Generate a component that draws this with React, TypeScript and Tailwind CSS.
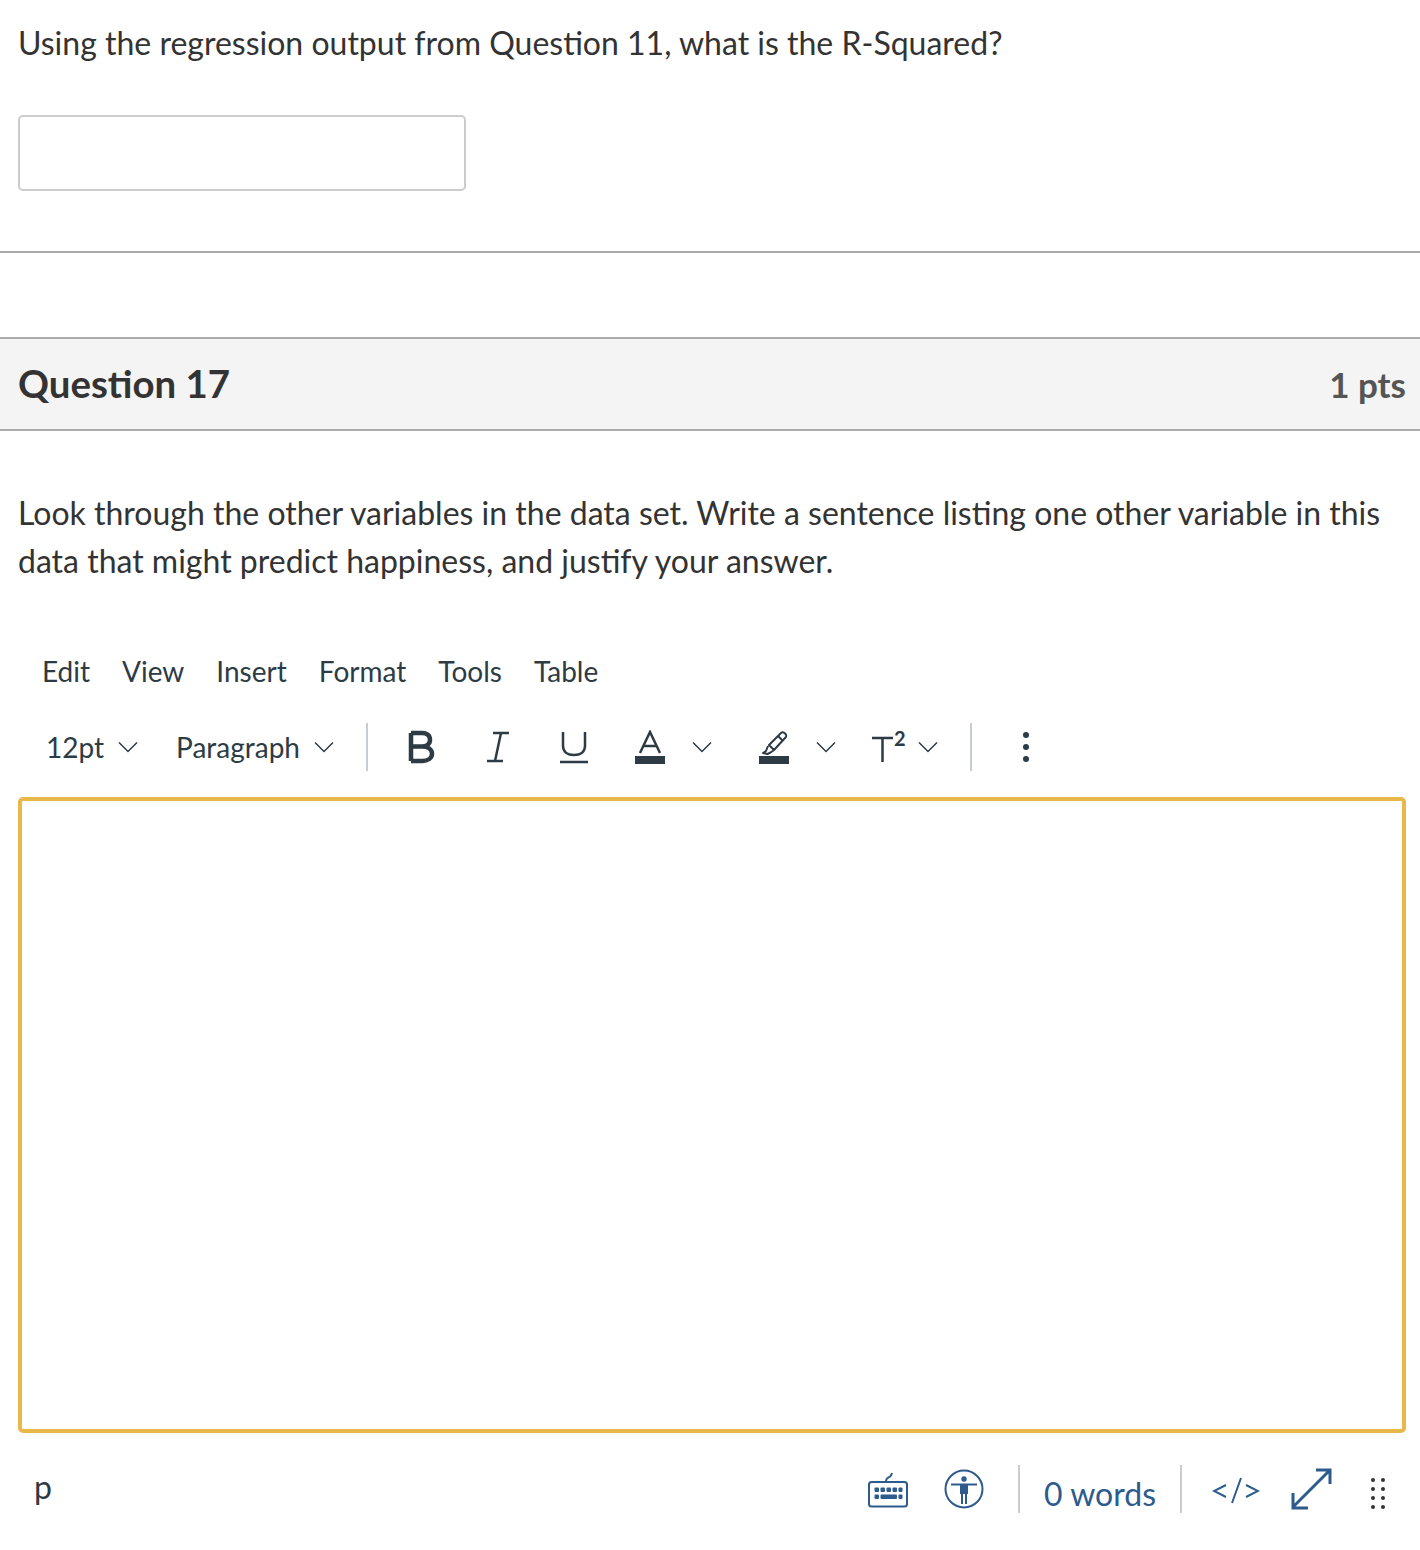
const ink = '#2d3b45';
const blue = '#2d5b8e';

function Chevron({ className }: { className: string }) {
    return (
        <svg width="20" height="12" viewBox="0 0 20 12" fill="none" stroke={ink} strokeWidth="1.5" className={`shrink-0 ${className}`}>
            <path d="M1 1.500l9 9 9-9" />
        </svg>
    );
}

function Keyboard() {
    return (
        <svg width="40" height="38" viewBox="0 0 40 38" fill="none" className="shrink-0 mt-0.5">
            <path d="M18 10c0-3 2-3 4-4.500 1-.8 1.500-1.700 2-3.500" stroke={blue} strokeWidth="2" />
            <rect x="1" y="11" width="38" height="24.500" rx="2.500" stroke={blue} strokeWidth="2" />
            <g fill={blue}>
                <rect x="6.500" y="16.500" width="4.500" height="4.500" rx="1" />
                <rect x="12.500" y="16.500" width="4.500" height="4.500" rx="1" />
                <rect x="18.500" y="16.500" width="4.500" height="4.500" rx="1" />
                <rect x="24.500" y="16.500" width="4.500" height="4.500" rx="1" />
                <rect x="30.500" y="16.500" width="4" height="4.500" rx="1" />
                <rect x="6.500" y="23.500" width="4.500" height="4.500" rx="1" />
                <rect x="12.500" y="23.500" width="16.500" height="4.500" rx="1" />
                <rect x="30.500" y="23.500" width="4" height="4.500" rx="1" />
            </g>
        </svg>
    );
}

function Accessibility() {
    return (
        <svg width="40" height="40" viewBox="0 0 40 40" fill="none" className="shrink-0">
            <circle cx="20" cy="20" r="18.500" stroke={blue} strokeWidth="2" />
            <circle cx="20" cy="10" r="2.700" fill={blue} />
            <path d="M7 14.500h26v2h-9v8.500h-1v10h-2v-10h-2v10h-2v-10h-1v-8.500H7z" fill={blue} />
        </svg>
    );
}

export default function App() {
    return (
        <div className="w-[1420px] h-[1550px] bg-white overflow-hidden font-['Lato','Open_Sans',sans-serif] text-[#2d3b45]">
            <div className="px-[18px] pt-[19px]">
                <p className="text-[32px] leading-[48px] text-[#333]">Using the regression output from Question 11, what is the R-Squared?</p>
                <div className="mt-[48px] w-[448px] h-[76px] border-2 border-[#ccc] rounded-[5px]" />
            </div>
            <div className="mt-[60px] h-0.5 bg-[#aaa]" />
            <div className="mt-[84px] h-[94px] bg-[#f4f4f4] border-y-2 border-[#aaa] pl-[18px] pr-[14px] flex items-center justify-between">
                <h2 className="text-[38.400px] font-bold text-[#333] leading-none -mt-0.5">Question 17</h2>
                <span className="text-[35px] font-bold text-[#555] leading-none">1 pts</span>
            </div>
            <div className="px-[18px] pt-[58px]">
                <p className="text-[32px] leading-[48px] text-[#333]">
                    Look through the other variables in the data set. Write a sentence listing one other variable in this data that might predict happiness, and justify your answer.
                </p>
            </div>

            <div className="mt-[62px] h-[48px] pl-[42px] flex items-center gap-[32px] text-[28px] leading-none">
                <span>Edit</span>
                <span>View</span>
                <span>Insert</span>
                <span>Format</span>
                <span>Tools</span>
                <span>Table</span>
            </div>

            <div className="mt-[28px] h-[48px] flex items-center text-[28px] leading-none">
                <span className="ml-[46px]">12pt</span>
                <Chevron className="ml-[14px]" />
                <span className="ml-[38px]">Paragraph</span>
                <Chevron className="ml-[14px]" />
                <div className="ml-[32px] w-0.5 h-12 bg-[#c7cdd1] shrink-0" />
                <svg width="30" height="34" viewBox="0 0 30 34" fill="none" stroke={ink} strokeWidth="4.500" className="ml-[39px] shrink-0">
                    <path d="M4 3v28M4 3h11c5 0 8 2.500 8 6.800S20 16.500 15 16.500H4M15 16.500c6 0 10 3 10 7.300S21 31 15 31H4" />
                </svg>
                <svg width="24" height="34" viewBox="0 0 24 34" fill="none" stroke={ink} strokeWidth="2.500" className="ml-[49px] shrink-0">
                    <path d="M7 3h16M1 31h16M15 3L9 31" />
                </svg>
                <svg width="28" height="34" viewBox="0 0 28 34" fill="none" stroke={ink} strokeWidth="2.500" className="ml-[50px] shrink-0">
                    <path d="M3 2v14c0 6 4.500 9 11 9s11-3 11-9V2M0 32h28" />
                </svg>
                <svg width="30" height="34" viewBox="0 0 30 34" fill="none" className="ml-[47px] shrink-0">
                    <path d="M5 23L15 2l10 21M8 16h14" stroke={ink} strokeWidth="2.500" />
                    <rect y="26" width="30" height="8" fill={ink} />
                </svg>
                <Chevron className="ml-[27px]" />
                <svg width="30" height="34" viewBox="0 0 30 34" fill="none" className="ml-[47px] shrink-0">
                    <path d="M10 15L22 3c1-1 2-1 3.500 0l1 1c1 1 1 2.500 0 3.500L15 20l-5-5zM9 16l-2 5-3 2 4.500 1 3-1.500 3-2" stroke={ink} strokeWidth="2" strokeLinejoin="round" />
                    <path d="M19 6l5 5" stroke={ink} strokeWidth="2" />
                    <rect y="26" width="30" height="8" fill={ink} />
                </svg>
                <Chevron className="ml-[27px]" />
                <span className="ml-[36px] relative w-[34px] h-[34px] shrink-0">
                    <svg width="34" height="34" viewBox="0 0 34 34" fill="none" stroke={ink} strokeWidth="2.500">
                        <path d="M0 8h21M10.500 8v24" />
                    </svg>
                    <span className="absolute left-[22px] top-[-2px] text-[20px] font-bold leading-none">2</span>
                </span>
                <Chevron className="ml-[12px]" />
                <div className="ml-[32px] w-0.5 h-12 bg-[#c7cdd1] shrink-0" />
                <div className="ml-[51px] flex flex-col gap-[6px]">
                    <span className="w-[6px] h-[6px] rounded-full bg-[#2d3b45]" />
                    <span className="w-[6px] h-[6px] rounded-full bg-[#2d3b45]" />
                    <span className="w-[6px] h-[6px] rounded-full bg-[#2d3b45]" />
                </div>
            </div>

            <div className="mt-[26px] ml-[18px] mr-[14px] h-[636px] border-[4px] border-[#e8b84a] rounded-[5px]" />

            <div className="mt-[32px] h-[48px] flex items-center">
                <span className="ml-[34px] text-[32px] leading-none -mt-1">p</span>
                <div className="ml-auto flex items-center h-full">
                    <Keyboard />
                    <div className="ml-[36px]"><Accessibility /></div>
                    <div className="ml-[34px] w-0.5 h-12 bg-[#ccc]" />
                    <span className="ml-[24px] text-[32px] leading-none text-[#2d5b8e] mt-2.5">0 words</span>
                    <div className="ml-[24px] w-0.5 h-12 bg-[#ccc]" />
                    <svg width="48" height="28" viewBox="0 0 48 28" fill="none" stroke={blue} strokeWidth="2" className="ml-[30px] shrink-0 mt-1">
                        <path d="M14 8L2 14l12 6M29 1l-9 25M34 8l12 6-12 6" />
                    </svg>
                    <svg width="42" height="42" viewBox="0 0 42 42" fill="none" stroke={blue} strokeWidth="3" className="ml-[30px] shrink-0">
                        <path d="M26 2h14v14M40 2L4 38M3 25v15h15" />
                    </svg>
                    <div className="ml-[39px] mr-[35px] mt-2 grid grid-cols-2 gap-x-[6px] gap-y-[5px]">
                        {[0, 1, 2, 3, 4, 5, 6, 7].map((i) => (
                            <span key={i} className="w-1 h-1 rounded-full bg-[#333]" />
                        ))}
                    </div>
                </div>
            </div>
        </div>
    );
}
